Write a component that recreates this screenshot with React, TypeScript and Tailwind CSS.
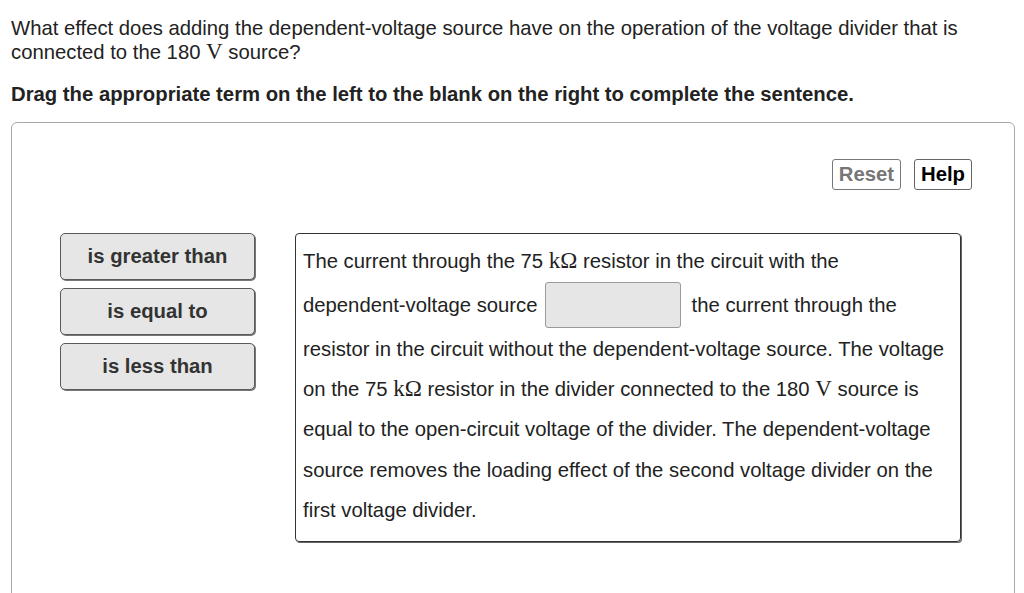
import React from "react";

const M = ({ children }: { children: React.ReactNode }) => (
  <span className="text-[23px] leading-[20px]" style={{ fontFamily: '"Liberation Serif", "DejaVu Serif", serif' }}>
    {children}
  </span>
);

const Choice = ({ label }: { label: string }) => (
  <div className="h-[47px] w-[195px] rounded-[5px] border border-[#5a5a5a] bg-[#e6e6e6] shadow-[1px_1px_0_#777] flex items-center justify-center text-[20.3px] font-bold text-[#333]">
    {label}
  </div>
);

export default function App() {
  return (
    <div
      className="w-[1024px] h-[593px] overflow-hidden bg-white text-[#222] pl-[11px] pt-[16px]"
      style={{ fontFamily: '"Liberation Sans", Arial, sans-serif' }}
    >
      <div className="text-[20.3px] leading-[24px] whitespace-nowrap">
        What effect does adding the dependent-voltage source have on the operation of the voltage divider that is
        <br />
        connected to the 180 <M>V</M> source?
      </div>
      <div className="mt-[18px] text-[20.3px] leading-[24px] font-bold text-[#222] whitespace-nowrap">
        Drag the appropriate term on the left to the blank on the right to complete the sentence.
      </div>
      <div className="mt-[16px] w-[1004px] h-[480px] rounded-[6px] border border-[#a8a8a8] relative">
        <div className="flex justify-end gap-[13px] pr-[42px] pt-[36px]">
          <div className="h-[31px] px-[6px] rounded-[3px] border border-[#777] flex items-center text-[20.3px] font-bold text-[#777]">
            Reset
          </div>
          <div className="h-[31px] px-[6px] rounded-[3px] border border-[#666] flex items-center text-[20.3px] font-bold text-black">
            Help
          </div>
        </div>
        <div className="flex pl-[48px] pt-[43px] gap-[40px]">
          <div className="flex flex-col gap-[8px]">
            <Choice label="is greater than" />
            <Choice label="is equal to" />
            <Choice label="is less than" />
          </div>
          <div className="w-[666px] h-[309px] rounded-[4px] border border-[#333] shadow-[1px_1px_0_#666] pl-[7px] pt-[7px] text-[20.3px] text-[#222] whitespace-nowrap">
            <div className="h-[40px] flex items-center">
              The current through the 75&nbsp;<M>kΩ</M>&nbsp;resistor in the circuit with the
            </div>
            <div className="h-[48px] flex items-center">
              <span>dependent-voltage source</span>
              <span className="ml-[7px] w-[136px] h-[46px] rounded-[3px] border border-[#9a9a9a] bg-[#e6e6e6] inline-block" />
              <span className="ml-[11px]">the current through the</span>
            </div>
            <div className="h-[40px] flex items-center">
              resistor in the circuit without the dependent-voltage source. The voltage
            </div>
            <div className="h-[40px] flex items-center">
              on the 75&nbsp;<M>kΩ</M>&nbsp;resistor in the divider connected to the 180&nbsp;<M>V</M>&nbsp;source is
            </div>
            <div className="h-[41px] flex items-center">
              equal to the open-circuit voltage of the divider. The dependent-voltage
            </div>
            <div className="h-[40px] flex items-center">
              source removes the loading effect of the second voltage divider on the
            </div>
            <div className="h-[41px] flex items-center">first voltage divider.</div>
          </div>
        </div>
      </div>
    </div>
  );
}
